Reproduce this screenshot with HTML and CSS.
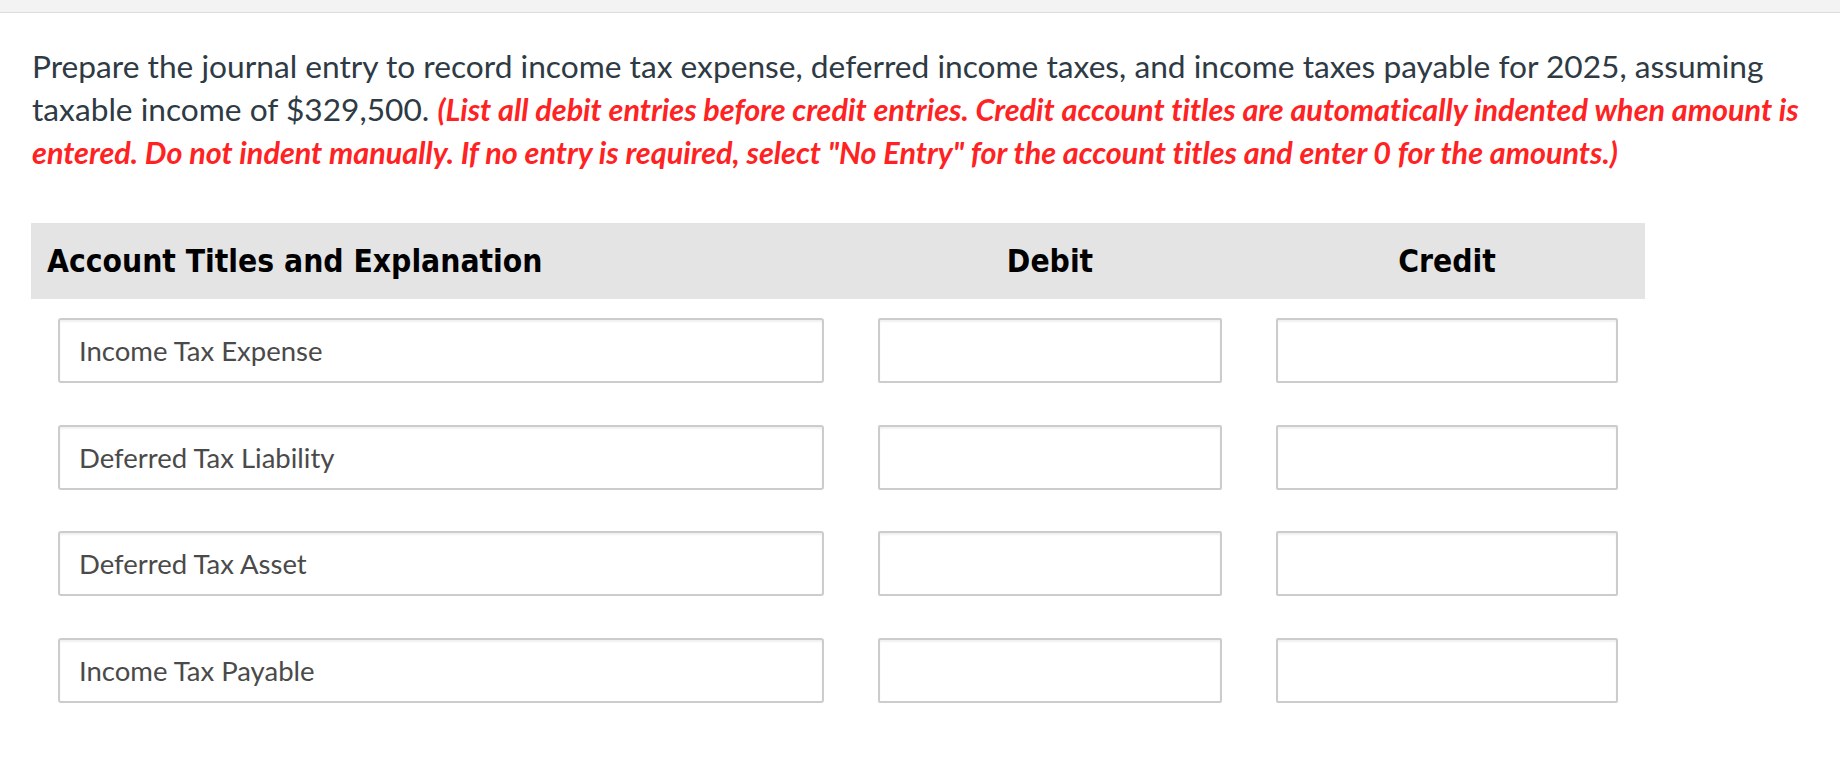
FILE: index.html
```html
<!DOCTYPE html>
<html lang="en">
<head>
<meta charset="utf-8">
<title>Journal entry</title>
<link rel="stylesheet" href="styles.css">
</head>
<body>
<div class="topbar"></div>
<main class="content">
  <p class="question">Prepare the journal entry to record income tax expense, deferred income taxes, and income taxes payable for 2025, assuming taxable income of $329,500. <em class="note">(List all debit entries before credit entries. Credit account titles are automatically indented when amount is entered. Do not indent manually. If no entry is required, select "No Entry" for the account titles and enter 0 for the amounts.)</em></p>
  <div class="journal">
    <div class="row head">
      <div class="cell account">Account Titles and Explanation</div>
      <div class="cell amount">Debit</div>
      <div class="cell amount">Credit</div>
    </div>
    <div class="row">
      <div class="cell account"><div class="field">Income Tax Expense</div></div>
      <div class="cell amount"><div class="field num"></div></div>
      <div class="cell amount"><div class="field num"></div></div>
    </div>
    <div class="row">
      <div class="cell account"><div class="field">Deferred Tax Liability</div></div>
      <div class="cell amount"><div class="field num"></div></div>
      <div class="cell amount"><div class="field num"></div></div>
    </div>
    <div class="row">
      <div class="cell account"><div class="field">Deferred Tax Asset</div></div>
      <div class="cell amount"><div class="field num"></div></div>
      <div class="cell amount"><div class="field num"></div></div>
    </div>
    <div class="row">
      <div class="cell account"><div class="field">Income Tax Payable</div></div>
      <div class="cell amount"><div class="field num"></div></div>
      <div class="cell amount"><div class="field num"></div></div>
    </div>
  </div>
</main>
</body>
</html>
```
FILE: styles.css
```css
html, body {
  margin: 0;
  padding: 0;
  background: #ffffff;
}
body {
  font-family: Lato, "Noto Sans", sans-serif;
  color: #2e3a44;
  font-variant-ligatures: none;
}
.topbar {
  height: 12px;
  background: #f3f3f3;
  border-bottom: 1px solid #dcdcdc;
}
.content {
  padding: 0 0 0 32px;
}
.question {
  margin: 32px 0 0 0;
  width: 1790px;
  font-size: 31.7px;
  line-height: 43px;
}
.note {
  font-weight: 700;
  font-style: italic;
  font-size: 30.6px;
  color: #ff2222;
}
.journal {
  margin-top: 49px;
  width: 1614px;
  margin-left: -1px;
}
.row {
  display: grid;
  grid-template-columns: 820px 398px 396px;
  padding-bottom: 41.5px;
}
.row.head {
  background: #e4e4e4;
  height: 76px;
  padding: 0;
  margin-bottom: 19px;
  align-items: center;
  font-family: "DejaVu Sans", Verdana, sans-serif;
  font-stretch: condensed;
  font-weight: 700;
  font-size: 31.5px;
  color: #000;
}
.cell {
  padding: 0 27px 0 27px;
}
.row.head .cell.account {
  padding-left: 16px;
}
.row.head .cell.amount {
  text-align: center;
}
.field {
  height: 65px;
  box-sizing: border-box;
  border: 2px solid #cccccc;
  border-radius: 3px;
  box-shadow: inset 0 2px 2px rgba(0,0,0,0.06);
  display: flex;
  align-items: center;
  padding-left: 19px;
  font-size: 27.5px;
  color: #4a4a4a;
  background: #fff;
}
.field.num {
  border-radius: 2px;
}
```
